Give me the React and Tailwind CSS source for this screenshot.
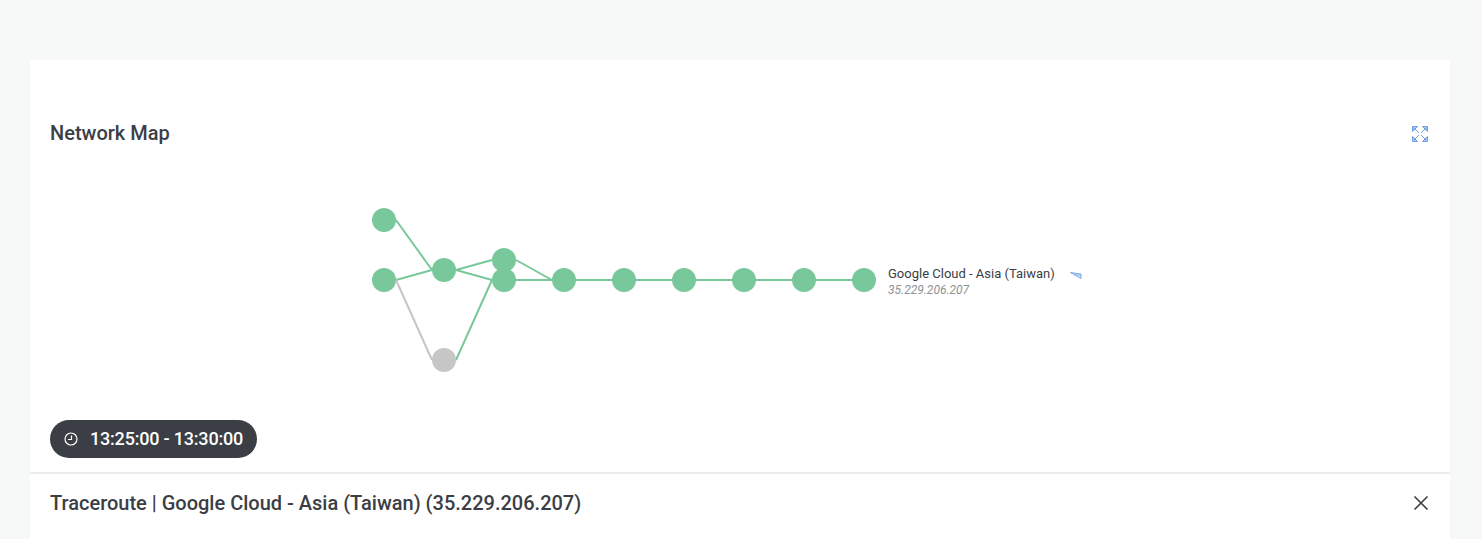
const GREEN = "#78c89b";
const GRAY = "#c6c6c6";
const nodes = [
  [354, 50, GREEN], [354, 110, GREEN], [414, 100, GREEN], [414, 190, GRAY],
  [474, 90, GREEN], [474, 110, GREEN], [534, 110, GREEN], [594, 110, GREEN],
  [654, 110, GREEN], [714, 110, GREEN], [774, 110, GREEN], [834, 110, GREEN],
];
const links = [
  [366, 50, 402, 100, GREEN], [366, 110, 402, 100, GREEN], [366, 110, 402, 190, GRAY],
  [426, 100, 462, 90, GREEN], [426, 100, 462, 110, GREEN], [426, 190, 462, 110, GREEN],
  [486, 90, 522, 110, GREEN], [486, 110, 522, 110, GREEN], [534, 110, 834, 110, GREEN],
];

function NetworkDiagram() {
  return (
    <svg width="1420" height="240" viewBox="0 0 1420 240" className="block">
      {links.map(([x1, y1, x2, y2, c], i) => (
        <line key={i} x1={x1} y1={y1} x2={x2} y2={y2} stroke={c} strokeWidth="2" />
      ))}
      {nodes.map(([cx, cy, c], i) => (
        <circle key={i} cx={cx} cy={cy} r="12" fill={c} />
      ))}
      <text x="858" y="108" fontSize="13" fill="#3b3e45" fontFamily="Roboto, sans-serif">Google Cloud - Asia (Taiwan)</text>
      <text x="858" y="124" fontSize="12" fontStyle="italic" fill="#8f9196" fontFamily="Roboto, sans-serif">35.229.206.207</text>
      <path d="M1040.5 102.5 L1051 104 L1051 108.5 Z" fill="#dbe8fa" stroke="#6f9fe6" strokeWidth="0.9" strokeLinejoin="round" />
      <path d="M1045 104.5 L1051 105.5" fill="none" stroke="#6f9fe6" strokeWidth="0.7" />
    </svg>
  );
}

export default function App() {
  return (
    <div className="h-[539px] overflow-hidden bg-[#f7f8f8] pl-[30px] pr-[32px] pt-[60px] font-['Roboto',sans-serif]">
      <div className="h-[479px] bg-white">
        <section className="h-[414px] border-b-2 border-[#ebebeb]">
          <div className="flex h-[110px] items-center justify-between pl-5 pr-[21px] pt-[37px]">
            <h2 className="-mt-px text-xl font-medium leading-6 text-[#3b3e45]">Network Map</h2>
            <svg width="18" height="18" viewBox="0 0 18 18" fill="none" stroke="#6f9fe6" strokeWidth="1">
              <path d="M1.5 6.5V1.5H6.5ZM16.5 6.5V1.5H11.5ZM1.5 11.5V16.5H6.5ZM16.5 11.5V16.5H11.5Z" fill="#a9c6f0" />
              <path d="M3 3L8 8M15 3L10 8M3 15L8 10M15 15L10 10" />
            </svg>
          </div>
          <NetworkDiagram />
          <div className="ml-5 mt-2.5 flex h-[38px] w-[207px] items-center gap-[12px] rounded-[19px] bg-[#3b3e45] pl-[14px] text-white">
            <svg width="14" height="14" viewBox="0 0 14 14" fill="none" stroke="#fff" strokeWidth="1.2">
              <circle cx="7" cy="7" r="6" />
              <path d="M7.5 3.5V7.5H4" />
            </svg>
            <span className="text-lg font-medium leading-none tracking-[-0.2px]">13:25:00 - 13:30:00</span>
          </div>
        </section>
        <div className="flex h-[58px] items-center justify-between pl-5 pr-[21px]">
          <h2 className="text-xl font-medium leading-6 text-[#3b3e45]">Traceroute | Google Cloud - Asia (Taiwan) (35.229.206.207)</h2>
          <svg width="16" height="16" viewBox="0 0 16 16" fill="none" stroke="#3b3e45" strokeWidth="1.6" className="-mt-px">
            <path d="M1.5 1.5L14.5 14.5M14.5 1.5L1.5 14.5" />
          </svg>
        </div>
      </div>
    </div>
  );
}
